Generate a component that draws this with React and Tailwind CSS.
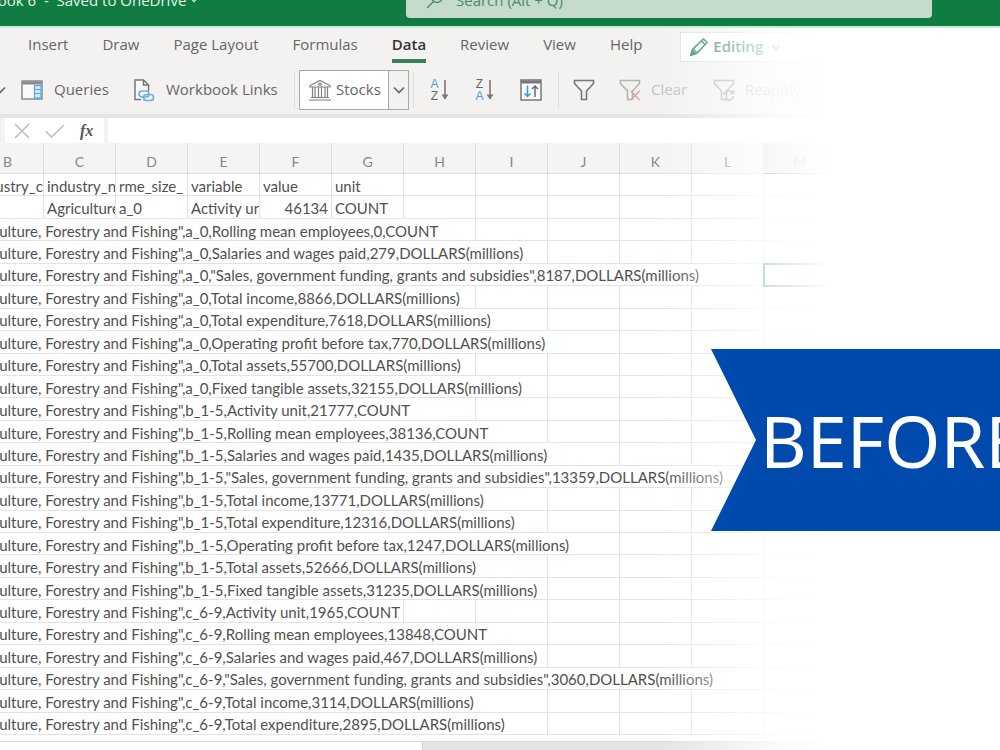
import { useState } from 'react';

const TABS = ['Insert', 'Draw', 'Page Layout', 'Formulas', 'Data', 'Review', 'View', 'Help'];
const COLUMNS = ['B', 'C', 'D', 'E', 'F', 'G', 'H', 'I', 'J', 'K', 'L', 'M'];

// span = how many columns the overflowing text covers, counted from B
const CSV_ROWS = [
  { text: 'a_0,Rolling mean employees,0,COUNT', span: 7 },
  { text: 'a_0,Salaries and wages paid,279,DOLLARS(millions)', span: 8 },
  { text: 'a_0,"Sales, government funding, grants and subsidies",8187,DOLLARS(millions)', span: 11, selected: true },
  { text: 'a_0,Total income,8866,DOLLARS(millions)', span: 7 },
  { text: 'a_0,Total expenditure,7618,DOLLARS(millions)', span: 8 },
  { text: 'a_0,Operating profit before tax,770,DOLLARS(millions)', span: 9 },
  { text: 'a_0,Total assets,55700,DOLLARS(millions)', span: 7 },
  { text: 'a_0,Fixed tangible assets,32155,DOLLARS(millions)', span: 8 },
  { text: 'b_1-5,Activity unit,21777,COUNT', span: 7 },
  { text: 'b_1-5,Rolling mean employees,38136,COUNT', span: 8 },
  { text: 'b_1-5,Salaries and wages paid,1435,DOLLARS(millions)', span: 9 },
  { text: 'b_1-5,"Sales, government funding, grants and subsidies",13359,DOLLARS(millions)', span: 11 },
  { text: 'b_1-5,Total income,13771,DOLLARS(millions)', span: 8 },
  { text: 'b_1-5,Total expenditure,12316,DOLLARS(millions)', span: 8 },
  { text: 'b_1-5,Operating profit before tax,1247,DOLLARS(millions)', span: 9 },
  { text: 'b_1-5,Total assets,52666,DOLLARS(millions)', span: 8 },
  { text: 'b_1-5,Fixed tangible assets,31235,DOLLARS(millions)', span: 8 },
  { text: 'c_6-9,Activity unit,1965,COUNT', span: 6 },
  { text: 'c_6-9,Rolling mean employees,13848,COUNT', span: 8 },
  { text: 'c_6-9,Salaries and wages paid,467,DOLLARS(millions)', span: 8 },
  { text: 'c_6-9,"Sales, government funding, grants and subsidies",3060,DOLLARS(millions)', span: 11 },
  { text: 'c_6-9,Total income,3114,DOLLARS(millions)', span: 8 },
  { text: 'c_6-9,Total expenditure,2895,DOLLARS(millions)', span: 8 },
];

const CELL = 'border-r border-b border-[#e3e3e3] p-0 pt-[2px]';

const Chevron = ({ className }) => (
  <svg viewBox="0 0 12 8" className={className} fill="none" stroke="currentColor" strokeWidth="1.6">
    <path d="M1 1.5 6 6.5 11 1.5" />
  </svg>
);

const QueriesIcon = () => (
  <svg viewBox="0 0 22 20" className="h-5 w-[22px] shrink-0" fill="none">
    <rect x="1" y="1" width="20" height="18" fill="#fafafa" stroke="#8a8a8a" strokeWidth="1.5" />
    <path d="M1 3h20" stroke="#8a8a8a" strokeWidth="3" />
    <rect x="13.5" y="5.5" width="6.5" height="12.5" fill="#cfe7f8" stroke="#5aa9dc" strokeWidth="1.2" />
    <path d="M13.5 9.5H20M13.5 13.5H20" stroke="#5aa9dc" strokeWidth="1.2" />
  </svg>
);

const WorkbookIcon = () => (
  <svg viewBox="0 0 22 24" className="h-6 w-[22px] shrink-0" fill="none">
    <path d="M8 21.5H2V2h8.5l5 5v6" fill="#fafafa" stroke="#777" strokeWidth="1.5" />
    <path d="M10.5 2v5h5" stroke="#777" strokeWidth="1.5" />
    <g stroke="#6db1dd" strokeWidth="1.7">
      <rect x="6" y="13" width="10" height="6" rx="3" />
      <rect x="10.5" y="16.5" width="10" height="6" rx="3" />
    </g>
  </svg>
);

const BankIcon = () => (
  <svg viewBox="0 0 24 22" className="h-[22px] w-6 shrink-0" fill="none" stroke="#808080" strokeWidth="1.2">
    <path d="M2 8V6.5L12 1.5l10 5V8zM3 18.5h18M1 21h22" />
    <path d="M4.5 8v10M7 8v10M10.5 8v10M13.5 8v10M17 8v10M19.5 8v10" />
    <circle cx="12" cy="5.3" r="1.2" />
  </svg>
);

const SortIcon = ({ top, bottom, topClass, bottomClass }) => (
  <span className="flex h-6 w-5 shrink-0 items-center">
    <span className="flex w-[9px] flex-col text-center font-['Liberation_Sans',sans-serif] text-xs leading-3">
      <span className={topClass}>{top}</span>
      <span className={bottomClass}>{bottom}</span>
    </span>
    <svg viewBox="0 0 10 22" className="h-[22px] w-[10px]" fill="none" stroke="#777" strokeWidth="1.6">
      <path d="M6 1v19" />
      <path d="M2.5 15.500h7L6 20.500z" fill="#777" stroke="none" />
    </svg>
  </span>
);

const CustomSortIcon = () => (
  <svg viewBox="0 0 22 22" className="size-[22px] shrink-0" fill="none">
    <rect x="1" y="1" width="20" height="20" fill="#fafafa" stroke="#777" strokeWidth="1.5" />
    <path d="M1 3h20" stroke="#777" strokeWidth="3" />
    <path d="M7.5 6.5v11M4.5 14.5l3 3 3-3" stroke="#3f98d3" strokeWidth="1.5" />
    <path d="M15 18V7M12 10l3-3 3 3" stroke="#6b6b6b" strokeWidth="1.5" />
  </svg>
);

const FunnelIcon = ({ stroke, children }) => (
  <svg viewBox="0 0 22 22" className="size-[22px] shrink-0" fill="none" stroke={stroke} strokeWidth="1.6">
    <path d="M1.5 1.5h19v3L13.5 12v8.5h-5V12l-7-7.5z" />
    {children}
  </svg>
);

const Divider = () => <span className="h-9 w-px shrink-0 bg-[#dcdad8]" />;

function TitleBar() {
  return (
    <header className="h-7 shrink-0 overflow-hidden border-b-2 border-[#bff0d5] bg-[#107c41]">
      <div className="-mt-[18px] -ml-[12px] flex h-9 items-center text-[15px] text-[#e3f2e9]">
        <button className="flex w-[418px] shrink-0 items-center gap-1 whitespace-pre">
          <span>Book 6  -  Saved to OneDrive</span>
          <Chevron className="h-[6px] w-2" />
        </button>
        <label className="flex h-9 w-[526px] items-center gap-3 rounded-sm bg-[#c5dccd] pl-5 text-[#4d8a67]">
          <svg viewBox="0 0 18 18" className="size-[18px] shrink-0" fill="none" stroke="currentColor" strokeWidth="1.5">
            <circle cx="11" cy="6.5" r="5" />
            <path d="M7.5 10.5 1 17" />
          </svg>
          <input
            aria-label="Search"
            placeholder="Search (Alt + Q)"
            className="w-full bg-transparent outline-none placeholder:text-[#4d8a67]"
          />
        </label>
      </div>
    </header>
  );
}

function Ribbon() {
  const [active, setActive] = useState('Data');

  return (
    <section className="shrink-0 border-b-4 border-[#e6e4e3] bg-[#f3f2f1] text-[#666]">
      <nav className="flex h-[37px] items-center gap-[34px] pl-7 text-[15px] whitespace-nowrap">
        {TABS.map((tab) => (
          <button
            key={tab}
            onClick={() => setActive(tab)}
            className={`h-8 border-b-4 ${
              active === tab ? 'border-[#217346]/90 font-semibold text-[#333]' : 'border-transparent'
            }`}
          >
            {tab}
          </button>
        ))}
        <button className="ml-1 flex h-[30px] w-[150px] items-center gap-1 border border-[#e1dfdd] bg-white pl-2 font-semibold text-[#2f8a58]">
          <svg viewBox="0 0 20 20" className="size-5" fill="none" stroke="currentColor" strokeWidth="1.7">
            <path d="M2 18 4 12 14.5 2l3.5 3.5L8 16z" />
            <path d="M4 12l4 4M12.5 4l3.5 3.5" />
            <path d="M2 18l1.2-4 2.8 2.8z" fill="currentColor" />
          </svg>
          Editing
          <Chevron className="ml-1 h-[6px] w-[10px]" />
        </button>
      </nav>

      <div className="flex h-[49px] items-center text-[15px] whitespace-nowrap">
        <Chevron className="-ml-[6px] h-2 w-3 shrink-0" />
        <button className="ml-[15px] flex w-[112px] shrink-0 items-center gap-[11px]">
          <QueriesIcon />
          Queries
        </button>
        <button className="flex w-[161px] shrink-0 items-center gap-[11px]">
          <WorkbookIcon />
          Workbook Links
        </button>
        <Divider />
        <div className="mx-1 flex h-10 w-[110px] shrink-0 border border-[#a8a8a8] bg-white">
          <button className="flex flex-1 items-center gap-1 pl-2">
            <BankIcon />
            Stocks
          </button>
          <button aria-label="More data types" className="flex w-5 items-center justify-center border-l border-[#a8a8a8] bg-[#f3f2f1]">
            <Chevron className="h-2 w-3" />
          </button>
        </div>
        <Divider />
        <div className="flex w-[144px] shrink-0 items-center gap-[25px] pl-4">
          <button aria-label="Sort A to Z">
            <SortIcon top="A" bottom="Z" topClass="text-[#4a9fd8]" bottomClass="text-[#666]" />
          </button>
          <button aria-label="Sort Z to A">
            <SortIcon top="Z" bottom="A" topClass="text-[#666]" bottomClass="text-[#4a9fd8]" />
          </button>
          <button aria-label="Custom sort">
            <CustomSortIcon />
          </button>
        </div>
        <Divider />
        <button aria-label="Filter" className="ml-[14px] w-[46px] shrink-0">
          <FunnelIcon stroke="#777" />
        </button>
        <button className="flex w-[94px] shrink-0 items-center gap-[10px] text-[#c2c0be]">
          <FunnelIcon stroke="#b5b3b1">
            <path d="M12 12l8.5 9M20.5 12 12 21" stroke="#e0a3a3" />
          </FunnelIcon>
          Clear
        </button>
        <button className="flex shrink-0 items-center gap-[10px] text-[#c2c0be]">
          <FunnelIcon stroke="#b5b3b1">
            <path d="M11 16a5 5 0 0 1 9-2M20.5 11v3.5H17M20.5 17a5 5 0 0 1-8 3" />
          </FunnelIcon>
          Reapply
        </button>
      </div>
    </section>
  );
}

function FormulaBar() {
  return (
    <div className="flex h-[25px] shrink-0 gap-1 bg-[#f3f3f3] pl-[5px]">
      <div className="flex w-[99px] items-center gap-[15px] bg-white pl-[9px] text-[#bbb]">
        <button aria-label="Cancel">
          <svg viewBox="0 0 16 16" className="size-4" fill="none" stroke="currentColor" strokeWidth="1.5">
            <path d="M1 1l14 14M15 1 1 15" />
          </svg>
        </button>
        <button aria-label="Enter">
          <svg viewBox="0 0 20 14" className="h-[14px] w-5" fill="none" stroke="currentColor" strokeWidth="1.5">
            <path d="M1 7.5 6.5 13 19 1" />
          </svg>
        </button>
        <button className="font-['Liberation_Serif',serif] text-base font-bold text-[#555] italic">fx</button>
      </div>
      <input aria-label="Formula" className="min-w-0 flex-1 bg-white px-2 outline-none" />
    </div>
  );
}

function Sheet() {
  return (
    <div className="min-h-0 flex-1 overflow-hidden">
      <table className="-ml-7 h-full w-[calc(100%+28px)] table-fixed border-separate border-spacing-0 font-[Lato,sans-serif] text-[15px] leading-4 whitespace-nowrap text-[#505050]">
        <colgroup>
          {COLUMNS.map((col) => (
            <col key={col} className="w-[72px]" />
          ))}
          <col />
        </colgroup>
        <thead>
          <tr className="h-[31px] bg-[#f4f4f4] text-sm text-[#888]">
            {COLUMNS.map((col) => (
              <th
                key={col}
                className={`border-r border-b border-[#dedede] p-0 pt-2 font-normal ${
                  col === 'M' ? 'border-b-[#107c41] bg-[#dcdcdc]' : ''
                }`}
              >
                {col}
              </th>
            ))}
            <th className="border-b border-[#dedede] p-0" />
          </tr>
        </thead>
        <tbody>
          <tr>
            {['industry_c', 'industry_n', 'rme_size_', 'variable', 'value', 'unit', '', '', '', '', '', '', ''].map((text, i) => (
              <td key={i} className={`${CELL} overflow-hidden pl-[3px]`}>{text}</td>
            ))}
          </tr>
          <tr>
            {['', 'Agriculture', 'a_0', 'Activity un', '46134', 'COUNT', '', '', '', '', '', '', ''].map((text, i) => (
              <td key={i} className={`${CELL} overflow-hidden pl-[3px] ${i === 4 ? 'pr-[3px] text-right' : ''}`}>{text}</td>
            ))}
          </tr>
          {CSV_ROWS.map((row) => (
            <tr key={row.text}>
              <td colSpan={row.span} className={`${CELL} pl-[11px]`}>
                {`riculture, Forestry and Fishing",${row.text}`}
              </td>
              {COLUMNS.slice(row.span).map((col) => (
                <td
                  key={col}
                  className={`${CELL} ${row.selected && col === 'M' ? 'outline-2 -outline-offset-1 outline-[#107c41]' : ''}`}
                />
              ))}
              <td className={CELL} />
            </tr>
          ))}
        </tbody>
      </table>
    </div>
  );
}

export default function App() {
  return (
    <div className="relative flex h-screen flex-col overflow-hidden bg-white font-['Open_Sans',sans-serif]">
      <TitleBar />
      <main className="relative flex min-h-0 flex-1 flex-col">
        <Ribbon />
        <FormulaBar />
        <Sheet />
        <footer className="mt-[6px] flex h-[9px] shrink-0 border-t border-[#dcdcdc]">
          <div className="w-[423px] border-r border-[#cfcfcf] bg-white" />
          <div className="flex-1 bg-[#e4e4e4]" />
        </footer>
        {/* the workbook dissolves into the white side */}
        <div className="pointer-events-none absolute inset-y-0 right-0 left-[660px] bg-linear-to-r from-white/0 via-white/80 via-[110px] to-white to-[170px]" />
      </main>
      <div className="absolute top-[349px] right-0 left-[711px] flex h-[182px] items-center overflow-hidden bg-[#004aad] pl-[49px] font-['Noto_Sans',sans-serif] text-7xl text-white [clip-path:polygon(0_0,100%_0,100%_100%,0_100%,45px_50%)]">
        BEFORE
      </div>
    </div>
  );
}
